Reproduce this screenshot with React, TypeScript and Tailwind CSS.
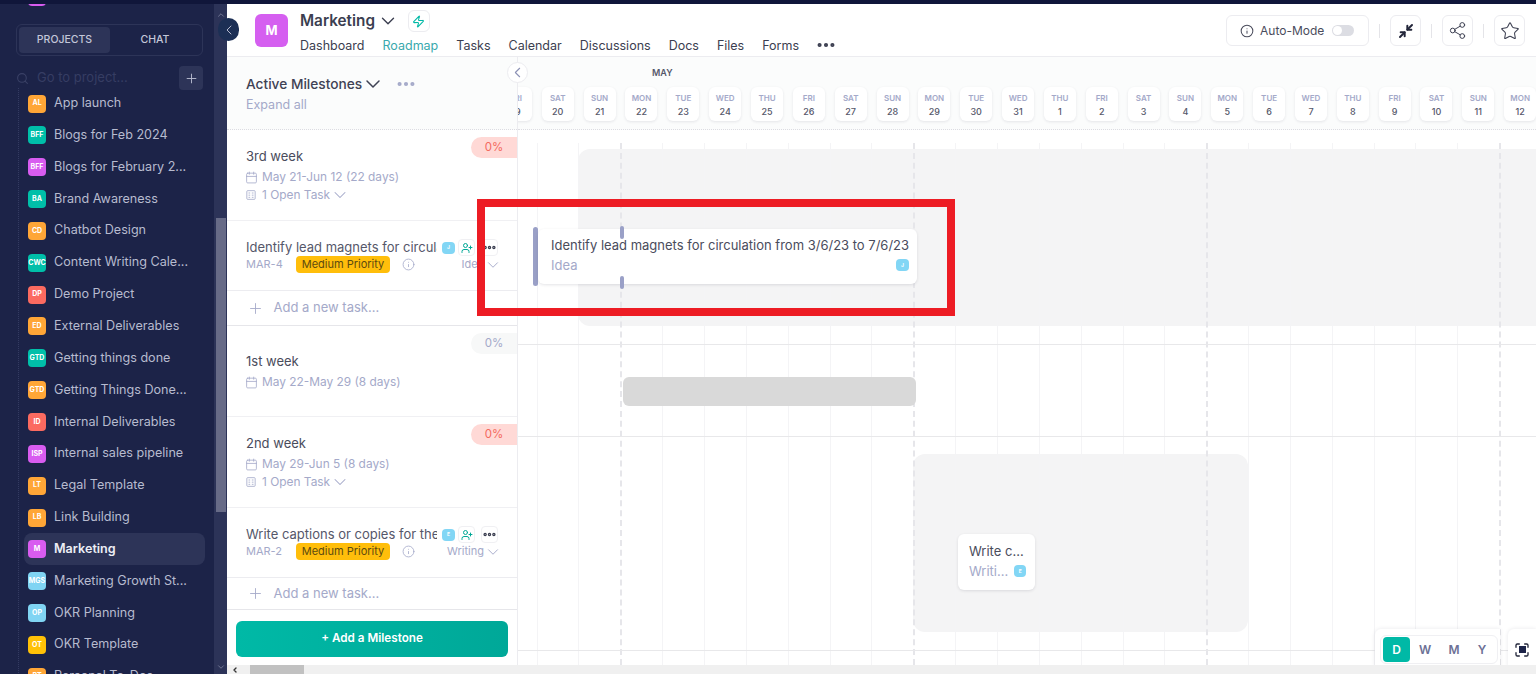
import React from 'react';
import {
  Calendar,
  ChevronDown,
  ChevronLeft,
  ChevronUp,
  Ellipsis,
  Info,
  Maximize,
  Minimize2,
  Plus,
  Search,
  Share2,
  Star,
  UserPlus,
  Zap,
} from 'lucide-react';

const ORANGE = 'bg-[#ffa637]';
const TEAL = 'bg-[#00bfa9]';
const PINK = 'bg-[#d85cf0]';
const RED = 'bg-[#fb6a60]';
const BLUE = 'bg-[#80d4f3]';
const YELLOW = 'bg-[#ffc107]';

const projects = [
  { code: 'AL', name: 'App launch', color: ORANGE },
  { code: 'BFF', name: 'Blogs for Feb 2024', color: TEAL },
  { code: 'BFF', name: 'Blogs for February 2...', color: PINK },
  { code: 'BA', name: 'Brand Awareness', color: TEAL },
  { code: 'CD', name: 'Chatbot Design', color: ORANGE },
  { code: 'CWC', name: 'Content Writing Cale...', color: TEAL },
  { code: 'DP', name: 'Demo Project', color: RED },
  { code: 'ED', name: 'External Deliverables', color: ORANGE },
  { code: 'GTD', name: 'Getting things done', color: TEAL },
  { code: 'GTD', name: 'Getting Things Done...', color: ORANGE },
  { code: 'ID', name: 'Internal Deliverables', color: RED },
  { code: 'ISP', name: 'Internal sales pipeline', color: PINK },
  { code: 'LT', name: 'Legal Template', color: ORANGE },
  { code: 'LB', name: 'Link Building', color: ORANGE },
  { code: 'M', name: 'Marketing', color: PINK, active: true },
  { code: 'MGS', name: 'Marketing Growth St...', color: BLUE },
  { code: 'OP', name: 'OKR Planning', color: BLUE },
  { code: 'OT', name: 'OKR Template', color: YELLOW },
  { code: 'PT', name: 'Personal To-Dos', color: ORANGE },
];

const days = [
  ['FRI', '19'], ['SAT', '20'], ['SUN', '21'], ['MON', '22'], ['TUE', '23'], ['WED', '24'],
  ['THU', '25'], ['FRI', '26'], ['SAT', '27'], ['SUN', '28'], ['MON', '29'], ['TUE', '30'],
  ['WED', '31'], ['THU', '1'], ['FRI', '2'], ['SAT', '3'], ['SUN', '4'], ['MON', '5'],
  ['TUE', '6'], ['WED', '7'], ['THU', '8'], ['FRI', '9'], ['SAT', '10'], ['SUN', '11'], ['MON', '12'],
];

const navItems = ['Dashboard', 'Roadmap', 'Tasks', 'Calendar', 'Discussions', 'Docs', 'Files', 'Forms'];

// day column boundaries, x relative to the timeline; every 7th one is the dashed week line
const columnLines = Array.from({ length: 25 }, (_, i) => 18.6 + i * 41.85);

const TaskListIcon = () => (
  <svg viewBox="0 0 12 12" className="mr-[6px] h-[10px] w-[10px]" fill="none" stroke="currentColor" strokeWidth="1">
    <rect x="1" y="0.8" width="10" height="10.4" rx="1" />
    <path d="M3 3.6h2M3 6.2h2M3 8.8h2M7 3.6h2M7 6.2h2M7 8.8h2" />
  </svg>
);

const Sidebar = () => (
  <aside className="flex w-[227px] shrink-0 bg-[#1c2348]">
    <div className="relative flex w-[214px] flex-col overflow-hidden">
      <div className="-mt-[12px] flex h-[14px] shrink-0 items-center gap-2 pl-[28px]">
        <span className="h-[14px] w-[18px] rounded bg-[#d85cf0]" />
        <span className="text-[12.6px] text-[#b7bbcf]">Sales Matters</span>
      </div>
      <div className="ml-4 mr-[11px] mt-[18px] flex h-[32px] shrink-0 rounded-md border border-[#2d3458] p-[2px]">
        <div className="flex w-[91px] items-center justify-center rounded bg-[#2d3458] text-[10.5px] font-medium text-[#c3c7d9]">
          PROJECTS
        </div>
        <div className="flex flex-1 items-center justify-center text-[10.5px] font-medium text-[#c3c7d9]">CHAT</div>
      </div>
      <div className="mt-[10px] flex h-[24px] shrink-0 items-center pl-4 pr-[11px]">
        <Search className="h-[13px] w-[13px] text-[#3a4166]" strokeWidth={2} />
        <span className="ml-[8px] flex-1 text-[13px] text-[#363d63]">Go to project...</span>
        <div className="flex h-6 w-6 items-center justify-center rounded bg-[#2d3458]">
          <Plus className="h-[15px] w-[15px] text-[#b7bbcf]" strokeWidth={1.5} />
        </div>
      </div>
      <div className="-mt-[2.4px] ml-[18px] flex-1 border-l border-dotted border-[#343b62] pl-[5px] pr-[9px]">
        {projects.map((p) => (
          <div
            key={p.name}
            className={`flex h-[31.85px] items-center gap-2 rounded-lg pl-[4px] ${p.active ? 'bg-[#2d3458]' : ''}`}
          >
            <span
              className={`flex h-[18px] w-[18px] shrink-0 items-center justify-center overflow-hidden rounded text-[7px] font-bold text-white ${p.color}`}
            >
              {p.code}
            </span>
            <span
              className={`whitespace-nowrap text-[12.6px] ${p.active ? 'font-semibold text-[#eceef5]' : 'text-[#b7bbcf]'}`}
            >
              {p.name}
            </span>
          </div>
        ))}
      </div>
    </div>
    <div className="flex w-[13px] flex-col items-center bg-[#2c3358]">
      <ChevronUp className="mt-[6px] h-[10px] w-[10px] text-[#7d829d]" />
      <div className="mt-[198px] h-[294px] w-[10px] bg-[#676b87]" />
      <div className="flex-1" />
      <ChevronDown className="mb-[2px] h-[10px] w-[10px] text-[#7d829d]" />
    </div>
  </aside>
);

const Header = () => (
  <header className="flex h-[53px] shrink-0 border-b border-[#ececf0] bg-white pl-7 pr-[11px]">
    <div className="mt-[10px] flex h-[33px] w-[33px] items-center justify-center rounded-md bg-[#d55ff0] text-[13px] font-bold text-white">
      M
    </div>
    <div className="ml-3 flex flex-col">
      <div className="mt-[6px] flex h-[22px] items-center">
        <span className="text-[15.3px] font-semibold text-[#3b3e50]">Marketing</span>
        <ChevronDown className="ml-[2px] h-[22px] w-[22px] text-[#3b3e50]" strokeWidth={1.5} />
        <div className="ml-[9px] flex h-[22px] w-[22px] items-center justify-center rounded-md border border-[#ececf0]">
          <Zap className="h-[13px] w-[13px] text-[#00b9a6]" strokeWidth={2} />
        </div>
      </div>
      <nav className="mt-[5px] flex flex-1 items-start gap-[18px]">
        {navItems.map((n) => (
          <span
            key={n}
            className={`flex h-full items-center whitespace-nowrap border-b pb-[3px] text-[12.5px] ${
              n === 'Roadmap' ? 'border-[#3aa9ad] text-[#3aa9ad]' : 'border-transparent text-[#3b3e50]'
            }`}
          >
            {n}
          </span>
        ))}
        <Ellipsis className="-ml-[2px] -mt-[3px] h-[22px] w-[22px] text-[#3b3e50]" strokeWidth={2.5} />
      </nav>
    </div>
    <div className="ml-auto mt-[11px] flex h-[31px] items-center">
      <div className="flex h-full w-[143px] items-center rounded-md border border-[#ececf0] pl-[13px]">
        <Info className="h-[14px] w-[14px] text-[#4a4c5c]" strokeWidth={1.75} />
        <span className="ml-[6px] text-[12px] text-[#4a4c5c]">Auto-Mode</span>
        <span className="ml-2 flex h-[11px] w-[22px] items-center rounded-full bg-[#dcdde3] pl-[1px]">
          <span className="h-[9px] w-[9px] rounded-full bg-white" />
        </span>
      </div>
      <span className="mx-[10px] h-[14px] w-px bg-[#e4e4e8]" />
      <div className="flex h-full w-[31px] items-center justify-center rounded-md border border-[#ececf0]">
        <Minimize2 className="h-[16px] w-[16px] text-[#23263a]" strokeWidth={3} />
      </div>
      <span className="mx-[10px] h-[14px] w-px bg-[#e4e4e8]" />
      <div className="flex h-full w-[31px] items-center justify-center rounded-md border border-[#ececf0]">
        <Share2 className="h-[19px] w-[19px] text-[#3b3e50]" strokeWidth={1.25} />
      </div>
      <span className="mx-[10px] h-[14px] w-px bg-[#e4e4e8]" />
      <div className="flex h-full w-[31px] items-center justify-center rounded-md border border-[#ececf0]">
        <Star className="h-[20px] w-[20px] text-[#3b3e50]" strokeWidth={1.25} />
      </div>
    </div>
  </header>
);

const Milestone = ({
  title,
  dates,
  percentClass,
  openTask,
}: {
  title: string;
  dates: string;
  percentClass: string;
  openTask?: boolean;
}) => (
  <div className={`relative h-[91px] border-b border-[#f0f0f3] pl-[19px] ${openTask ? 'pt-[18px]' : 'pt-[27px]'}`}>
    <div className={`absolute right-0 top-[7px] flex h-[21px] w-[46px] items-center justify-center rounded-l-full text-[11.5px] ${percentClass}`}>
      0%
    </div>
    <div className="h-4 text-[13px] leading-4 text-[#4a4c5c]">{title}</div>
    <div className="mt-[5px] flex h-4 items-center text-[11.9px] text-[#a4a9c9]">
      <Calendar className="-ml-px mr-1 h-[13px] w-[13px]" strokeWidth={1.5} />
      {dates}
    </div>
    {openTask && (
      <div className="mt-[2px] flex h-4 items-center text-[11.9px] text-[#a4a9c9]">
        <TaskListIcon />
        1 Open Task
        <ChevronDown className="h-[20px] w-[20px]" strokeWidth={1.25} />
      </div>
    )}
  </div>
);

const TaskRow = ({ title, id, chip, status }: { title: string; id: string; chip: string; status: string }) => (
  <div className="h-[70px] border-b border-[#ececf0] pl-[19px] pr-[19px] pt-[18px]">
    <div className="flex h-[17px] items-center">
      <span className="w-[191px] overflow-hidden whitespace-nowrap text-[13px] text-[#55576a]">{title}</span>
      <span className="ml-[5px] flex h-[12px] w-[13px] shrink-0 items-center justify-center rounded-sm bg-[#82d6f5] text-[5px] font-bold text-white">
        {chip}
      </span>
      <span className="ml-[3px] flex h-[17px] w-[17px] shrink-0 items-center justify-center rounded border border-[#f0f0f3]">
        <UserPlus className="h-[12px] w-[12px] text-[#00a896]" strokeWidth={2} />
      </span>
      <span className="ml-[6px] flex h-[17px] w-[17px] shrink-0 items-center justify-center rounded border border-[#f0f0f3]">
        <Ellipsis className="h-[17px] w-[17px] text-[#3b3e50]" strokeWidth={3.5} />
      </span>
    </div>
    <div className="flex h-[17px] items-center">
      <span className="w-[50px] text-[11px] text-[#a4a9c9]">{id}</span>
      <span className="flex h-[17px] w-[94px] items-center justify-center rounded bg-[#ffbe0b] text-[11px] text-[#5c4a10]">
        Medium Priority
      </span>
      <Info className="ml-[12px] h-[13px] w-[13px] text-[#a4a9c9]" strokeWidth={1.5} />
      <span className="-mr-[4px] ml-auto flex items-center text-[11px] text-[#a4a9c9]">
        {status}
        <ChevronDown className="h-[18px] w-[18px]" strokeWidth={1.25} />
      </span>
    </div>
  </div>
);

const AddTask = ({ h }: { h: string }) => (
  <div className={`flex items-center border-b border-[#e6e6ea] pl-[19.5px] text-[13px] text-[#a4a9c9] ${h}`}>
    <Plus className="h-[17px] w-[17px]" strokeWidth={1.25} />
    <span className="ml-[10px]">Add a new task...</span>
  </div>
);

const MilestonePanel = () => (
  <div className="flex w-[291px] shrink-0 flex-col border-r border-[#ececf0] bg-white">
    <div className="h-[73px] shrink-0 border-b border-dotted border-[#dcdce2] bg-[#fbfcfc] pl-[19px] pt-[18px]">
      <div className="flex h-[18px] items-center text-[13.7px] font-medium text-[#3f4254]">
        Active Milestones
        <ChevronDown className="-ml-px h-[24px] w-[24px]" strokeWidth={1.5} />
        <Ellipsis className="ml-[10px] h-[22px] w-[22px] text-[#a4a9c9]" strokeWidth={2.5} />
      </div>
      <div className="mt-[3px] text-[12.5px] text-[#a4a9c9]">Expand all</div>
    </div>
    <Milestone title="3rd week" dates="May 21-Jun 12 (22 days)" percentClass="bg-[#ffd9d6] text-[#f46a60]" openTask />
    <TaskRow title="Identify lead magnets for circulation from" id="MAR-4" chip="J" status="Idea" />
    <AddTask h="h-[35px]" />
    <Milestone title="1st week" dates="May 22-May 29 (8 days)" percentClass="bg-[#f7f8f8] text-[#a4a9c9]" />
    <Milestone title="2nd week" dates="May 29-Jun 5 (8 days)" percentClass="bg-[#ffd9d6] text-[#f46a60]" openTask />
    <TaskRow title="Write captions or copies for the campaign" id="MAR-2" chip="E" status="Writing" />
    <AddTask h="h-[32px]" />
    <div className="flex flex-1 items-start px-[9px] pt-[11px]">
      <div className="flex h-[36px] w-full items-center justify-center rounded-md bg-gradient-to-r from-[#00b9a6] to-[#00a898] text-[11.7px] font-semibold text-white">
        + Add a Milestone
      </div>
    </div>
  </div>
);

const Timeline = () => (
  <div className="flex min-w-0 flex-1 flex-col overflow-hidden bg-white">
    <div className="relative h-[73px] shrink-0 border-b border-dotted border-[#dcdce2] bg-[#fbfcfc]">
      <div className="pl-[134px] pt-[10px] text-[9px] font-semibold leading-[11px] text-[#55576a]">MAY</div>
      <div className="-ml-[23px] mt-[9px] flex">
        {days.map(([d, n]) => (
          <div key={d + n} className="flex w-[41.85px] shrink-0 justify-center">
            <div className="flex h-[34px] w-[32px] flex-col items-center justify-center rounded-md bg-white pt-px shadow-[0_1px_3px_rgba(30,30,60,0.1)]">
              <span className="text-[8px] font-semibold leading-[13px] text-[#a4a9c9]">{d}</span>
              <span className="text-[9px] font-medium leading-[13px] text-[#55576a]">{n}</span>
            </div>
          </div>
        ))}
      </div>
    </div>
    <div className="relative flex-1 overflow-hidden">
      <div className="absolute left-[60px] top-[19px] h-[177px] w-[980px] rounded-xl bg-[#f4f4f5]" />
      <div className="absolute left-[395px] top-[324px] h-[178px] w-[335px] rounded-xl bg-[#f4f4f5]" />
      {columnLines.map((x, i) => (
        <div
          key={x}
          className={`absolute bottom-0 top-[13px] ${
            (i + 5) % 7 === 0 ? 'border-l-2 border-dashed border-[#e6e6ea]' : 'border-l border-[#f4f4f6]'
          }`}
          style={{ left: x }}
        />
      ))}
      <div className="absolute inset-x-0 top-[214px] h-px bg-[#e8e8ea]" />
      <div className="absolute inset-x-0 top-[306px] h-px bg-[#e8e8ea]" />
      <div className="absolute inset-x-0 top-[520px] h-px bg-[#e8e8ea]" />
      <div className="absolute left-[105px] top-[247px] h-[29px] w-[293px] rounded-md bg-[#d9d9d9]" />

      <div className="absolute left-[15px] top-[97px] h-[59px] w-[5px] rounded-sm bg-[#9aa0c7]" />
      <div className="absolute left-[20px] top-[99px] h-[55px] w-[379px] rounded-md bg-white pl-[13px] pr-2 pt-[7px] shadow-[0_1px_3px_rgba(30,30,60,0.12)]">
        <div className="whitespace-nowrap text-[13px] leading-[18px] text-[#4a4c5c]">
          Identify lead magnets for circulation from 3/6/23 to 7/6/23
        </div>
        <div className="mt-[2px] flex items-center justify-between text-[13px] leading-[18px] text-[#a4a9c9]">
          Idea
          <span className="flex h-[12px] w-[13px] items-center justify-center rounded-sm bg-[#82d6f5] text-[5px] font-bold text-white">
            J
          </span>
        </div>
      </div>
      <div className="absolute left-[102px] top-[96px] h-[13px] w-[4px] rounded-sm bg-[#9aa0c7]" />
      <div className="absolute left-[102px] top-[146px] h-[13px] w-[4px] rounded-sm bg-[#9aa0c7]" />

      <div className="absolute left-[440px] top-[404px] h-[56px] w-[77px] rounded-md bg-white pl-[11px] pt-[8px] shadow-[0_1px_3px_rgba(30,30,60,0.12)]">
        <div className="text-[13px] leading-[18px] text-[#4a4c5c]">Write c...</div>
        <div className="mt-[2px] flex items-center text-[13px] leading-[18px] text-[#a4a9c9]">
          Writi...
          <span className="ml-[6px] flex h-[12px] w-[12px] items-center justify-center rounded-sm bg-[#82d6f5] text-[5px] font-bold text-white">
            E
          </span>
        </div>
      </div>

      <div className="absolute left-[857px] top-[499px] flex h-[41px] w-[125px] items-center rounded-l-md bg-white pl-[5px] shadow-[0_0_4px_rgba(30,30,60,0.1)]">
        <div className="flex h-[29px] w-[118px] items-center rounded-md border border-[#f0f0f3] pl-[2px] text-[12px] font-semibold text-[#6d7196]">
          <span className="flex h-[25px] w-[27px] items-center justify-center rounded bg-[#00b9a6] text-white">D</span>
          <span className="ml-[5px] w-[20px] text-center">W</span>
          <span className="ml-[9px] w-[20px] text-center">M</span>
          <span className="ml-[8px] w-[20px] text-center">Y</span>
        </div>
      </div>
      <div className="absolute left-[990px] top-[499px] flex h-[41px] w-[28px] items-center justify-center rounded-l-md bg-white shadow-[0_0_4px_rgba(30,30,60,0.1)]">
        <span className="relative flex h-[16px] w-[16px] items-center justify-center">
          <Maximize className="absolute inset-0 h-[16px] w-[16px] text-[#23263a]" strokeWidth={2} />
          <span className="h-[7px] w-[7px] bg-[#1c2348]" />
        </span>
      </div>
    </div>
  </div>
);

export default function App() {
  return (
    <div className="relative flex h-[674px] w-[1536px] flex-col overflow-hidden bg-white font-['Inter',sans-serif]">
      <div className="relative z-10 h-1 shrink-0 bg-[#10163a]" />
      <div className="flex min-h-0 flex-1">
        <Sidebar />
        <main className="flex min-w-0 flex-1 flex-col">
          <Header />
          <div className="flex min-h-0 flex-1">
            <MilestonePanel />
            <Timeline />
          </div>
          <div className="flex h-[9px] shrink-0 items-center bg-[#f0f0f0] pl-[4px]">
            <ChevronLeft className="h-[8px] w-[8px] text-[#333]" strokeWidth={4} />
            <div className="ml-[11px] h-full w-[54px] bg-[#c1c1c1]" />
          </div>
        </main>
      </div>

      <div className="absolute left-[218px] top-[18px] flex h-[23px] w-[21px] items-center justify-center rounded-full bg-[#1c2f55]">
        <ChevronLeft className="h-[16px] w-[16px] text-[#b7bbcf]" strokeWidth={1.5} />
      </div>
      <div className="absolute left-[507px] top-[62px] flex h-[21px] w-[21px] items-center justify-center rounded-full border border-[#ececf0] bg-white">
        <ChevronLeft className="h-[17px] w-[17px] text-[#8c91b5]" strokeWidth={1.5} />
      </div>
      <div className="absolute left-[477px] top-[199px] h-[117px] w-[478px] border-[8px] border-[#ed1c24]" />
    </div>
  );
}
